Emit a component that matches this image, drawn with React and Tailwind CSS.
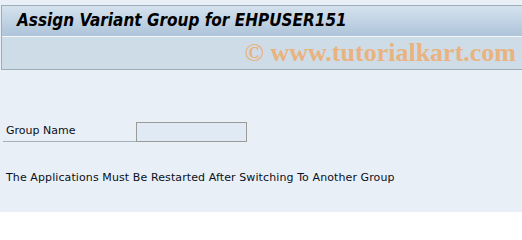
export default function App() {
  return (
    <div className="w-[522px] h-[212px] bg-[#e9eff6] overflow-hidden relative" style={{ fontFamily: '"DejaVu Sans", sans-serif' }}>
      {/* Header */}
      <div className="pt-[5px]">
        <div className="border-t border-b border-l border-[#9fadbb] ml-[1px]">
          <div className="h-[30px] bg-gradient-to-b from-[#d5e2ee] to-[#aec4da] flex items-center pl-[15px]">
            <h1 className="text-[17px] font-bold italic text-black" style={{ fontFamily: '"DejaVu Sans Condensed", "DejaVu Sans", sans-serif', fontStretch: 'condensed' }}>
              Assign Variant Group for EHPUSER151
            </h1>
          </div>
          <div className="h-px bg-[#f4f7fa]"></div>
          <div className="h-[32px] bg-[#cedce8] flex items-center justify-end pr-[6px]">
            <span className="text-[26px] font-bold leading-none text-[#e9b380]" style={{ fontFamily: '"Liberation Serif", serif' }}>
              © www.tutorialkart.com
            </span>
          </div>
        </div>
      </div>

      {/* Body */}
      <div className="pt-[52px] pl-[3px]">
        <div className="flex items-end">
          <div className="w-[133px] border-b border-[#a8b0b8] pl-[3px] pb-[2px] text-[11px] text-[#0a1020]">
            Group Name
          </div>
          <input className="w-[111px] h-[20px] bg-[#dfeaf5] border border-[#9a9a9a] outline-none" />
        </div>
        <p className="mt-[28px] pl-[3px] text-[11px] tracking-[0.1px] text-[#0a1020]">
          The Applications Must Be Restarted After Switching To Another Group
        </p>
      </div>
    </div>
  );
}
